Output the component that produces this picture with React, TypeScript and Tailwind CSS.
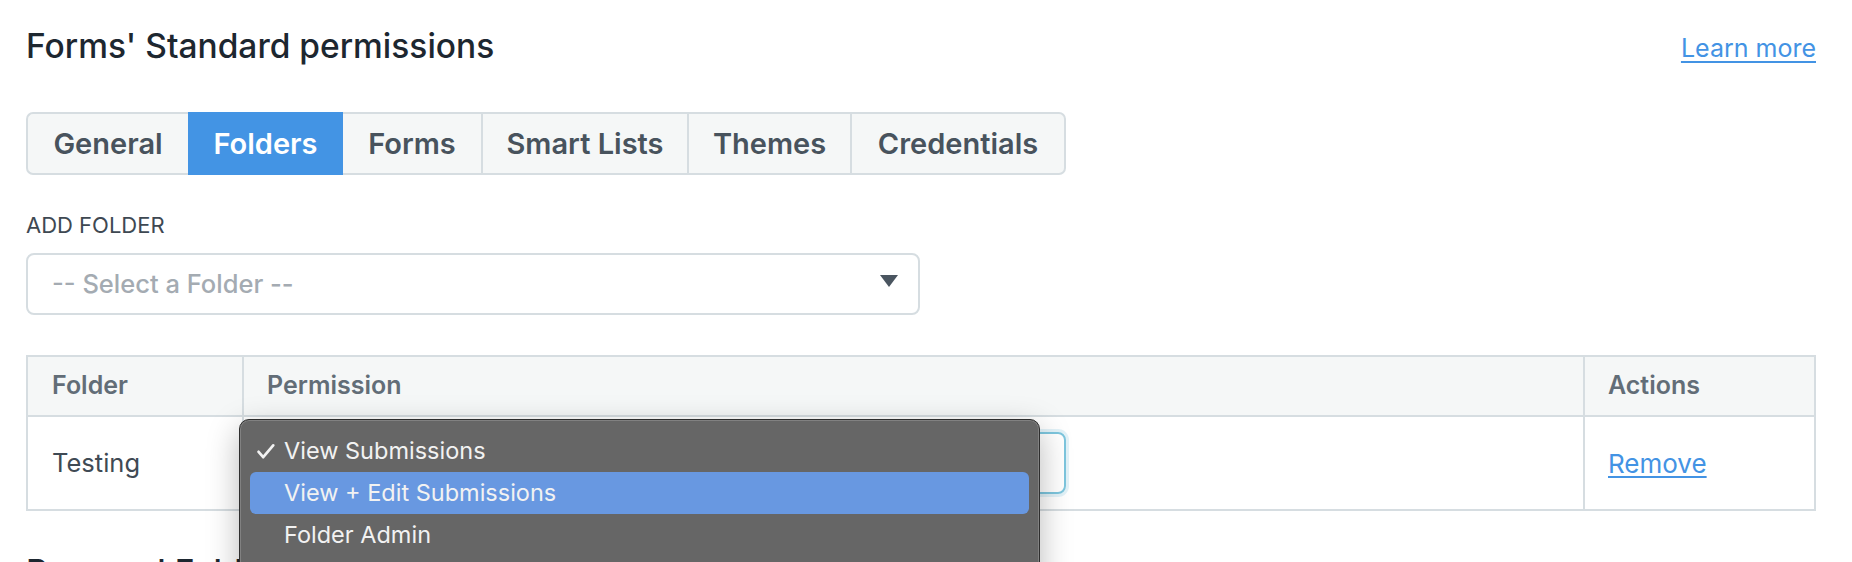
import { useState } from 'react'

const tabs = [
  { label: 'General', width: 'w-[162px]' },
  { label: 'Folders', width: 'w-[155px]' },
  { label: 'Forms', width: 'w-[138px]' },
  { label: 'Smart Lists', width: 'w-[206px]' },
  { label: 'Themes', width: 'w-[163px]' },
  { label: 'Credentials', width: 'w-[216px]' },
]

const permissionOptions = ['View Submissions', 'View + Edit Submissions', 'Folder Admin']

function Tabs({ active }: { active: string }) {
  return (
    <div className="flex h-[63px] w-fit">
      {tabs.map((tab, index) => {
        const isActive = tab.label === active
        const prevActive = index > 0 && tabs[index - 1].label === active
        const isFirst = index === 0
        const isLast = index === tabs.length - 1
        return (
          <button
            key={tab.label}
            className={[
              tab.width,
              'flex items-center justify-center border-y-2 text-[29px] leading-[34px] font-semibold',
              isActive
                ? 'bg-[#4394e4] border-[#4394e4] text-white'
                : 'bg-[#f5f7f7] border-[#d6dde1] text-[#48535d]',
              isFirst ? 'border-l-2 rounded-l-[7px]' : '',
              !isFirst && !isActive && !prevActive ? 'border-l-2' : '',
              isLast ? 'border-r-2 rounded-r-[7px]' : '',
            ].join(' ')}
          >
            {tab.label}
          </button>
        )
      })}
    </div>
  )
}

function Caret() {
  return (
    <svg width="18" height="12" viewBox="0 0 18 12" className="mb-[6px]">
      <path d="M0 0 H18 L9 12 Z" fill="#4a5560" />
    </svg>
  )
}

function Check() {
  return (
    <svg width="18" height="15" viewBox="0 0 18 15" className="absolute left-[7px] top-[14px]">
      <path
        d="M1.6 7.8 L6.2 13.2 L16.2 1.4"
        fill="none"
        stroke="#f2f2f2"
        strokeWidth="2.7"
        strokeLinecap="round"
        strokeLinejoin="round"
      />
    </svg>
  )
}

function PermissionMenu({ selected, hovered }: { selected: string; hovered: string }) {
  return (
    <div className="absolute left-[239px] top-[419px] w-[801px] h-[200px] rounded-[10px] border border-[#2e2e2e] bg-[#666666] shadow-[0_10px_32px_rgba(0,0,0,0.28),inset_0_0_0_1px_rgba(255,255,255,0.18)] px-[10px] pt-[10px] font-['Inter',_sans-serif]">
      {permissionOptions.map((option) => (
        <div
          key={option}
          className={[
            'relative h-[42px] flex items-center pl-[34px] rounded-[6px] text-[23.5px] text-[#f2f2f2]',
            option === hovered ? 'bg-[#6898e1]' : '',
          ].join(' ')}
        >
          {option === selected && <Check />}
          {option}
        </div>
      ))}
    </div>
  )
}

export default function App() {
  const [activeTab] = useState('Folders')

  return (
    <div className="relative w-[1852px] h-[562px] overflow-hidden bg-white pl-[26px] pr-[36px] font-['Inter',_sans-serif]">
      {/* Header */}
      <div className="flex items-start justify-between pt-[26px]">
        <h1 className="text-[33.5px] leading-[40px] font-medium text-[#1d2730]">
          Forms' Standard permissions
        </h1>
        <a href="#" className="mt-[7px] text-[25px] leading-[30px] text-[#4393e4] underline underline-offset-[4px] decoration-2">
          Learn more
        </a>
      </div>

      <div className="mt-[46px]">
        <Tabs active={activeTab} />
      </div>

      {/* Add folder */}
      <div className="mt-[35px] text-[22px] leading-[30px] text-[#3e4852]">ADD FOLDER</div>
      <div className="mt-[13px] flex h-[62px] w-[894px] items-center justify-between rounded-[8px] border-2 border-[#d6dde1] pl-[24px] pr-[20px]">
        <span className="text-[25.5px] leading-[34px] font-medium text-[#a4abb2]">-- Select a Folder --</span>
        <Caret />
      </div>

      {/* Folder table */}
      <div className="mt-[40px] w-[1790px] border-2 border-[#d6dde1]">
        <div className="flex h-[60px] border-b-2 border-[#d6dde1] bg-[#f5f7f7] text-[25px] font-semibold text-[#626d77]">
          <div className="flex w-[216px] items-center border-r-2 border-[#d6dde1] pl-[24px]">Folder</div>
          <div className="flex w-[1341px] items-center border-r-2 border-[#d6dde1] pl-[23px]">Permission</div>
          <div className="flex flex-1 items-center pl-[23px]">Actions</div>
        </div>
        <div className="flex h-[92px]">
          <div className="flex w-[216px] items-center border-r-2 border-[#d6dde1] pl-[24px] text-[25.5px] text-[#3f4a54]">Testing</div>
          <div className="flex w-[1341px] items-center border-r-2 border-[#d6dde1] pl-[24px]">
            <div className="h-[62px] w-[798px] rounded-[8px] border-2 border-[#7dc6de] shadow-[0_0_0_3px_rgba(125,198,222,0.22)]" />
          </div>
          <div className="flex flex-1 items-center pl-[23px]">
            <a href="#" className="text-[26px] text-[#4393e4] underline underline-offset-[3px] decoration-2">
              Remove
            </a>
          </div>
        </div>
      </div>

      <h2 className="mt-[41px] text-[33.5px] leading-[40px] font-medium text-[#1d2730]">Personal Folders</h2>

      <PermissionMenu selected="View Submissions" hovered="View + Edit Submissions" />
    </div>
  )
}
